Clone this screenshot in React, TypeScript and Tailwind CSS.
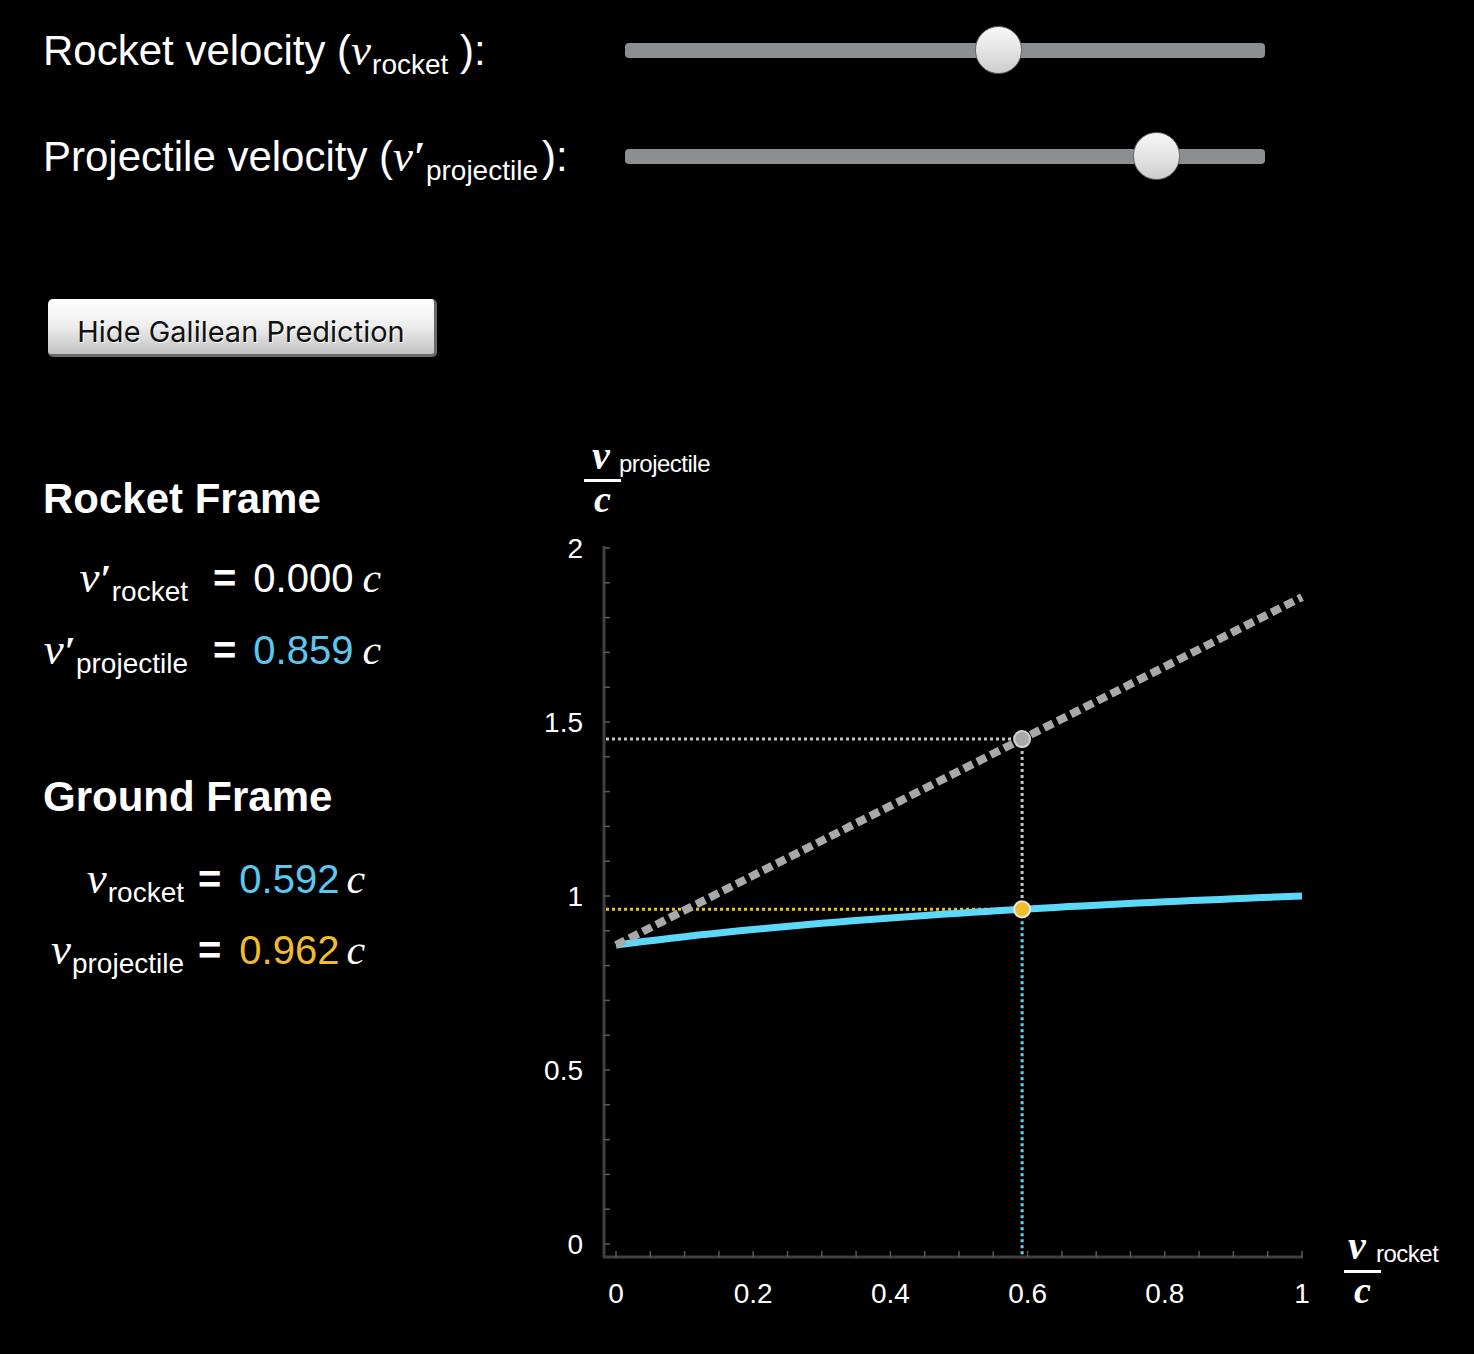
import React from "react";

const SANS = "font-['Liberation_Sans',Arial,sans-serif]";
const SERIF = "font-['Liberation_Serif','Times_New_Roman',serif]";

const V_ROCKET = 0.592;
const V_PROJ = 0.859;

// chart scale (page coordinates, svg viewBox matches the page)
const toX = (u: number) => 616 + 686 * u;
const toY = (v: number) => 1244 - 348 * v;

const relAdd = (u: number, w: number) => (u + w) / (1 + u * w);

const Slider = ({ thumbLeft }: { thumbLeft: string }) => (
  <div className="relative w-[640px] h-[48px] flex items-center">
    <div className="w-full h-[15px] rounded-[4px] bg-[#8b8f92]" />
    <div
      className={`absolute top-0 ${thumbLeft} w-[47px] h-[48px] rounded-full border-[1.5px] border-[#676767] bg-linear-to-b from-[#f7f7f7] via-[#e4e4e4] to-[#cdcdcd]`}
    />
  </div>
);

const MathV = ({ prime = false }: { prime?: boolean }) => (
  <>
    <span className={`${SERIF} italic text-[45px] mr-[1px]`}>v</span>
    {prime && <span className={`${SERIF} font-bold`}>′</span>}
  </>
);

const Sub = ({ children }: { children: React.ReactNode }) => (
  <span className="relative top-[9px] text-[28px]">{children}</span>
);

const ValueRow = ({
  prime,
  sub,
  value,
  color,
  labelW,
  eqGap,
  valGap,
  cGap,
  mt,
}: {
  prime?: boolean;
  sub: string;
  value: string;
  color: string;
  labelW: string;
  eqGap: string;
  valGap: string;
  cGap: string;
  mt: string;
}) => (
  <div className={`flex items-baseline h-[40px] leading-none text-[40px] text-white ${mt}`}>
    <div className={`${labelW} text-right whitespace-nowrap`}>
      <MathV prime={prime} />
      <Sub>{sub}</Sub>
    </div>
    <span className={`${eqGap} font-bold`}>=</span>
    <span className={`${valGap} ${color}`}>{value}</span>
    <span className={`${cGap} ${SERIF} italic text-[42px]`}>c</span>
  </div>
);

const Chart = () => {
  const rel = relAdd(V_ROCKET, V_PROJ);
  const gal = V_ROCKET + V_PROJ;
  const px = toX(V_ROCKET);

  const curve: string[] = [];
  for (let i = 0; i <= 50; i++) {
    const u = i / 50;
    curve.push(`${i === 0 ? "M" : "L"}${toX(u).toFixed(1)},${toY(relAdd(u, V_PROJ)).toFixed(1)}`);
  }

  const yTicks = Array.from({ length: 21 }, (_, i) => toY(i / 10));
  const xTicks = Array.from({ length: 21 }, (_, i) => toX(i / 20));

  return (
    <svg width={954} height={924} viewBox="520 430 954 924" className="block shrink-0">
      {/* axes */}
      <line x1={604} y1={546} x2={604} y2={1258} stroke="#404040" strokeWidth={3} />
      <line x1={603} y1={1257} x2={1303} y2={1257} stroke="#404040" strokeWidth={3} />
      {yTicks.map((y, i) => (
        <line key={`y${i}`} x1={604} y1={y} x2={610} y2={y} stroke="#5a5a5a" strokeWidth={1.5} />
      ))}
      {xTicks.map((x, i) => (
        <line key={`x${i}`} x1={x} y1={1251} x2={x} y2={1257} stroke="#5a5a5a" strokeWidth={1.5} />
      ))}

      {/* tick labels */}
      <g fill="#fff" fontFamily="'Liberation Sans', Arial, sans-serif" fontSize={28}>
        {[
          ["2", 2],
          ["1.5", 1.5],
          ["1", 1],
          ["0.5", 0.5],
          ["0", 0],
        ].map(([t, v]) => (
          <text key={t as string} x={583} y={toY(v as number)} textAnchor="end" dominantBaseline="central">
            {t}
          </text>
        ))}
        {["0", "0.2", "0.4", "0.6", "0.8", "1"].map((t, i) => (
          <text key={t} x={toX(i * 0.2)} y={1293} textAnchor="middle" dominantBaseline="central">
            {t}
          </text>
        ))}
      </g>

      {/* axis titles */}
      <g fill="#fff">
        <text x={592} y={469} fontFamily="'Liberation Serif', serif" fontStyle="italic" fontWeight="bold" fontSize={40}>
          v
        </text>
        <text x={619} y={472} fontFamily="'Liberation Sans', Arial, sans-serif" fontSize={24} letterSpacing={-0.5}>
          projectile
        </text>
        <rect x={584} y={479} width={37} height={3} />
        <text x={594} y={512} fontFamily="'Liberation Serif', serif" fontStyle="italic" fontWeight="bold" fontSize={38}>
          c
        </text>

        <text x={1348} y={1259} fontFamily="'Liberation Serif', serif" fontStyle="italic" fontWeight="bold" fontSize={40}>
          v
        </text>
        <text x={1376} y={1262} fontFamily="'Liberation Sans', Arial, sans-serif" fontSize={24} letterSpacing={-0.5}>
          rocket
        </text>
        <rect x={1344} y={1270} width={37} height={3} />
        <text x={1354} y={1303} fontFamily="'Liberation Serif', serif" fontStyle="italic" fontWeight="bold" fontSize={38}>
          c
        </text>
      </g>

      {/* guide lines */}
      <line x1={606} y1={toY(gal)} x2={px} y2={toY(gal)} stroke="#c4c4c4" strokeWidth={3} strokeDasharray="3 3" />
      <line x1={px} y1={toY(gal)} x2={px} y2={toY(rel)} stroke="#c4c4c4" strokeWidth={3} strokeDasharray="3 3" />
      <line x1={606} y1={toY(rel)} x2={px} y2={toY(rel)} stroke="#f0bd2f" strokeWidth={3} strokeDasharray="3 3" />
      <line x1={px} y1={toY(rel)} x2={px} y2={1256} stroke="#5cd6f7" strokeWidth={3} strokeDasharray="3 3" />

      {/* relativistic curve */}
      <path d={curve.join(" ")} fill="none" stroke="#5cd8f8" strokeWidth={7} />
      {/* galilean prediction */}
      <line
        x1={toX(0)}
        y1={toY(V_PROJ)}
        x2={toX(1)}
        y2={toY(1 + V_PROJ)}
        stroke="#a9a9a9"
        strokeWidth={8}
        strokeDasharray="10 5"
      />

      <circle cx={px} cy={toY(gal)} r={8} fill="#a9a9a9" stroke="#d2d2d2" strokeWidth={2} />
      <circle cx={px} cy={toY(rel)} r={8} fill="#f0bd2f" stroke="#e8e8e8" strokeWidth={2} />
    </svg>
  );
};

export default function App() {
  return (
    <div className={`w-[1474px] min-h-[1354px] bg-black text-white ${SANS}`}>
      <div className="pt-[26px] pl-[43px]">
        <div className="flex items-center h-[48px]">
          <div className="w-[582px] text-[42px] leading-none whitespace-nowrap">
            Rocket velocity (<MathV />
            <Sub>rocket</Sub> ):
          </div>
          <Slider thumbLeft="left-[350px]" />
        </div>
        <div className="flex items-center h-[48px] mt-[58px]">
          <div className="w-[582px] text-[42px] leading-none whitespace-nowrap">
            Projectile velocity (<MathV prime />
            <Sub>projectile</Sub>
            <span className="ml-[4px]">):</span>
          </div>
          <Slider thumbLeft="left-[508px]" />
        </div>
      </div>

      <button className="ml-[48px] mt-[119px] w-[389px] h-[58px] pt-[10px] rounded-[5px] bg-linear-to-b from-white via-[#ededed] to-[#c2c2c2] border-r-[3px] border-b-[3px] border-[#6a6a6a] font-['Inter',sans-serif] text-[29px] leading-none text-[#111] [text-shadow:1px_1px_0_rgba(255,255,255,0.9)]">
        Hide Galilean Prediction
      </button>

      <div className="flex mt-[73px]">
        <div className="w-[520px] pl-[43px] pt-[48px]">
          <h2 className="text-[42px] font-bold leading-none">Rocket Frame</h2>
          <ValueRow
            prime
            sub="rocket"
            value="0.000"
            color="text-white"
            labelW="w-[145px]"
            eqGap="ml-[25px]"
            valGap="ml-[17px]"
            cGap="ml-[9px]"
            mt="mt-[35px]"
          />
          <ValueRow
            prime
            sub="projectile"
            value="0.859"
            color="text-[#5ac8f0]"
            labelW="w-[145px]"
            eqGap="ml-[25px]"
            valGap="ml-[17px]"
            cGap="ml-[9px]"
            mt="mt-[32px]"
          />

          <h2 className="mt-[109px] text-[42px] font-bold leading-none">Ground Frame</h2>
          <ValueRow
            sub="rocket"
            value="0.592"
            color="text-[#5ac8f0]"
            labelW="w-[141px]"
            eqGap="ml-[14px]"
            valGap="ml-[18px]"
            cGap="ml-[7px]"
            mt="mt-[38px]"
          />
          <ValueRow
            sub="projectile"
            value="0.962"
            color="text-[#f0bc2e]"
            labelW="w-[141px]"
            eqGap="ml-[14px]"
            valGap="ml-[18px]"
            cGap="ml-[7px]"
            mt="mt-[31px]"
          />
        </div>
        <Chart />
      </div>
    </div>
  );
}
